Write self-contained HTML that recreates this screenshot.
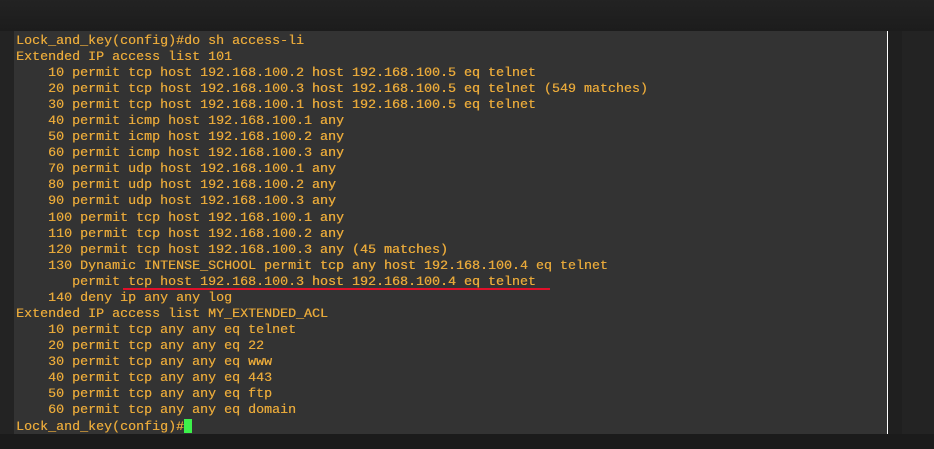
<!DOCTYPE html>
<html><head><meta charset="utf-8"><style>
html,body{margin:0;padding:0;background:#232323;width:934px;height:449px;overflow:hidden}
.top{position:absolute;left:0;top:0;width:934px;height:31px;background:linear-gradient(#232323,#1c1c1c)}
.bot{position:absolute;left:0;top:434px;width:934px;height:15px;background:#1b1b1b}
.rs{position:absolute;left:888px;top:31px;width:14px;height:403px;background:#1f1f1f}
.panel{position:absolute;left:14px;top:31px;width:873px;height:403px;background:#333333;border-right:1px solid #fff}
pre{position:absolute;left:16px;top:34px;margin:0;font-family:"Liberation Mono",monospace;font-size:13.33px;line-height:16.05px;color:#e8a93a;text-shadow:0.3px 0 0 #e8a93a}
.cur{display:inline-block;width:8px;height:14px;background:#3cf04a;vertical-align:-3px}
.red{position:absolute;left:123px;top:288px;width:427px;height:2px;background:#e0102a}
</style></head><body>
<div class="top"></div><div class="bot"></div><div class="rs"></div>
<div class="panel"></div>
<pre>Lock_and_key(config)#do sh access-li
Extended IP access list 101
    10 permit tcp host 192.168.100.2 host 192.168.100.5 eq telnet
    20 permit tcp host 192.168.100.3 host 192.168.100.5 eq telnet (549 matches)
    30 permit tcp host 192.168.100.1 host 192.168.100.5 eq telnet
    40 permit icmp host 192.168.100.1 any
    50 permit icmp host 192.168.100.2 any
    60 permit icmp host 192.168.100.3 any
    70 permit udp host 192.168.100.1 any
    80 permit udp host 192.168.100.2 any
    90 permit udp host 192.168.100.3 any
    100 permit tcp host 192.168.100.1 any
    110 permit tcp host 192.168.100.2 any
    120 permit tcp host 192.168.100.3 any (45 matches)
    130 Dynamic INTENSE_SCHOOL permit tcp any host 192.168.100.4 eq telnet
       permit tcp host 192.168.100.3 host 192.168.100.4 eq telnet
    140 deny ip any any log
Extended IP access list MY_EXTENDED_ACL
    10 permit tcp any any eq telnet
    20 permit tcp any any eq 22
    30 permit tcp any any eq www
    40 permit tcp any any eq 443
    50 permit tcp any any eq ftp
    60 permit tcp any any eq domain
Lock_and_key(config)#<span class="cur"></span></pre>
<div class="red"></div>
</body></html>
